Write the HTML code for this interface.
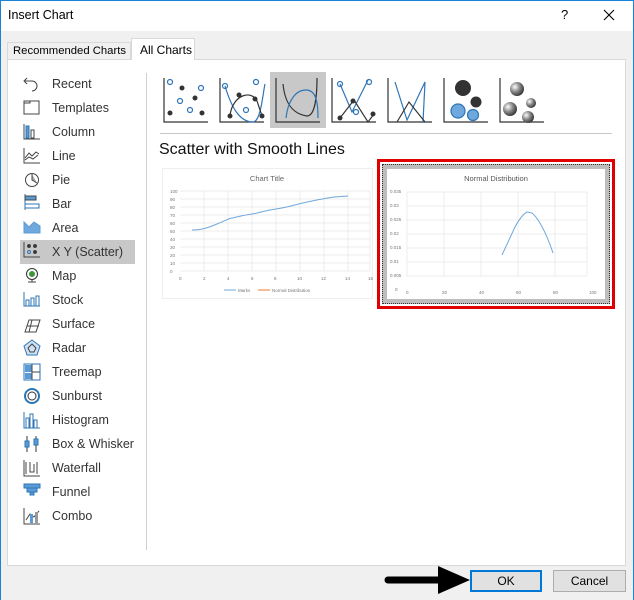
<!DOCTYPE html>
<html><head><style>
*{margin:0;padding:0;box-sizing:border-box}
body{width:634px;height:600px;background:#f0f0f0;font-family:"Liberation Sans",sans-serif;position:relative;overflow:hidden;color:#222}
.abs{position:absolute}
#win{left:0;top:0;width:634px;height:600px;border:1px solid #1883d7;border-bottom:none}
#title{left:1px;top:1px;width:632px;height:30px;background:#fff}
.li{position:absolute;left:52px;font-size:12.5px;color:#333}
.btn{position:absolute;top:570px;height:22px;background:#e1e1e1;border:1px solid #adadad;font-size:12px;text-align:center;line-height:20px;color:#000}
</style></head><body>
<div id="win" class="abs"></div>
<div id="title" class="abs"></div>
<div class="abs" style="left:8px;top:8px;font-size:12.5px;color:#000">Insert Chart</div>
<div class="abs" style="left:561px;top:7px;font-size:13px;color:#000">?</div>
<svg class="abs" style="left:603px;top:9px" width="12" height="12"><path d="M1 1L11 11M11 1L1 11" stroke="#000" stroke-width="1.1"/></svg>
<!-- tabs -->
<div class="abs" style="left:7px;top:42px;width:124px;height:18px;border:1px solid #d9d9d9;border-bottom:none;background:#f0f0f0;font-size:11.3px;padding:2px 0 0 5px;color:#000;white-space:nowrap;overflow:hidden">Recommended Charts</div>
<div class="abs" style="left:131px;top:38px;width:64px;height:22px;border:1px solid #d9d9d9;border-bottom:none;background:#fff;font-size:12px;padding:4px 0 0 8px;color:#000;z-index:2;white-space:nowrap">All Charts</div>
<div class="abs" style="left:7px;top:59px;width:619px;height:507px;background:#fff;border:1px solid #d9d9d9"></div>
<div class="abs" style="left:146px;top:73px;width:1px;height:477px;background:#d0d0d0"></div>
<div class="abs" style="left:20px;top:240px;width:115px;height:24px;background:#c8c8c8"></div>
<div class="li" style="top:77px">Recent</div>
<div class="li" style="top:101px">Templates</div>
<div class="li" style="top:125px">Column</div>
<div class="li" style="top:149px">Line</div>
<div class="li" style="top:173px">Pie</div>
<div class="li" style="top:197px">Bar</div>
<div class="li" style="top:221px">Area</div>
<div class="li" style="top:245px">X Y (Scatter)</div>
<div class="li" style="top:269px">Map</div>
<div class="li" style="top:293px">Stock</div>
<div class="li" style="top:317px">Surface</div>
<div class="li" style="top:341px">Radar</div>
<div class="li" style="top:365px">Treemap</div>
<div class="li" style="top:389px">Sunburst</div>
<div class="li" style="top:413px">Histogram</div>
<div class="li" style="top:437px">Box &amp; Whisker</div>
<div class="li" style="top:461px">Waterfall</div>
<div class="li" style="top:485px">Funnel</div>
<div class="li" style="top:509px">Combo</div>
<svg class="abs" style="left:22px;top:74px" width="20" height="460" fill="none" stroke="#444" stroke-width="1">
<path d="M5 4l-3 3 3 3M3 7h7a5 5 0 0 1 0 10" />
<path d="M2 27h15v13H2zM2 29h6v-2" />
<rect x="4" y="52" width="3" height="12" fill="#5b9bd5" stroke="#2e75b6"/><rect x="9" y="56" width="3" height="8"/><path d="M2 50v15h16"/>
<path d="M2 74v15h16M3 84l4-5 3 3 4-4 3 2M3 86l4-3 4 2 5-4" />
<circle cx="10" cy="106" r="6.5"/><path d="M10 100v6l5 3" fill="#aaa"/>
<path d="M3 120v16M3 122h11v4H3M3 130h14v4H3" stroke="#2e75b6"/><rect x="3" y="122" width="11" height="4" fill="#5b9bd5"/>
<path d="M2 148l5 5 5-5 6 4v7H2z" fill="#6fa8dc" stroke="#5b9bd5"/>
<path d="M2 168v15h16" stroke="#444"/><circle cx="7" cy="172" r="1.5" fill="#333"/><circle cx="13" cy="172" r="1.5" fill="#333"/><circle cx="7" cy="178" r="1.5" stroke="#2e75b6"/><circle cx="13" cy="178" r="1.5" fill="#333"/>
<circle cx="10" cy="200" r="5.5" stroke="#333"/><circle cx="10" cy="200" r="3" fill="#3a9a3a" stroke="none"/><path d="M6 208h8M10 206v2"/>
<path d="M2 218v14h16M4 226h3v6H4zM9 224h3v8H9zM14 222h3v10h-3z" stroke="#2e75b6"/>
<path d="M3 258l4-12h11l-4 12zM5 252h12M10 246l-3 12" />
<path d="M10 266l8 6-3 9H5l-3-9z" stroke="#2e75b6" fill="#cfe2f3"/><path d="M10 270l4 4-2 4H8l-2-4z"/>
<rect x="2" y="290" width="16" height="16" stroke="#2e75b6"/><rect x="3" y="291" width="7" height="7" fill="#5b9bd5" stroke="none"/><rect x="3" y="299" width="7" height="6" fill="#5b9bd5" stroke="none"/><path d="M10 290v16M10 298h8"/>
<circle cx="10" cy="322" r="7" stroke="#2e75b6" stroke-width="2"/><circle cx="10" cy="322" r="4" stroke="#333"/>
<path d="M2 338v16h16M4 344h3v10H4zM8 340h3v14H8zM12 346h3v8h-3z" stroke="#2e75b6"/>
<path d="M5 362v16M14 362v16" stroke="#333"/><rect x="3" y="367" width="4" height="6" fill="#5b9bd5" stroke="#2e75b6"/><rect x="12" y="365" width="4" height="6" fill="#5b9bd5" stroke="#2e75b6"/>
<path d="M2 386v16h16M4 388v12M8 388v10h4v-8M15 388v12"/>
<path d="M2 410h16v4H2zM5 414h10v4H5zM8 418h4v3H8z" fill="#5b9bd5" stroke="#2e75b6"/>
<path d="M2 434v16h16M4 446l4-6 4 3 5-6" /><rect x="8" y="440" width="3" height="9" fill="#5b9bd5" stroke="none"/><rect x="13" y="438" width="3" height="11" fill="#999" stroke="none"/>
</svg>
<!-- chart type icons -->
<div class="abs" style="left:270px;top:72px;width:56px;height:56px;background:#c8c8c8"></div>
<svg class="abs" style="left:160px;top:72px" width="390" height="60" fill="none" stroke-width="1.2">
<g stroke="#333"><path d="M4 6v44h44M60 6v44h44M116 6v44h44M172 6v44h44M228 6v44h44M284 6v44h44M340 6v44h44"/></g>
<g stroke="#2e75b6"><circle cx="10" cy="10" r="2.5"/><circle cx="41" cy="16" r="2.5"/><circle cx="20" cy="29" r="2.5"/><circle cx="30" cy="38" r="2.5"/></g>
<g fill="#333"><circle cx="22" cy="16" r="2.5"/><circle cx="35" cy="26" r="2.5"/><circle cx="10" cy="41" r="2.5"/><circle cx="42" cy="41" r="2.5"/></g>
<path d="M65 14c6 20 14 36 28 36 8 0 10-30 12-38" stroke="#2e75b6"/><path d="M70 44c2-22 24-28 28-12l4 12" stroke="#333"/>
<g stroke="#2e75b6"><circle cx="65" cy="14" r="2.5"/><circle cx="96" cy="10" r="2.5"/><circle cx="86" cy="38" r="2.5"/></g>
<g fill="#333"><circle cx="70" cy="44" r="2.5"/><circle cx="79" cy="23" r="2.5"/><circle cx="95" cy="27" r="2.5"/><circle cx="102" cy="44" r="2.5"/></g>
<path d="M123 12c2 20 10 30 24 32 8 0 10-20 10-38" stroke="#333"/><path d="M126 46c2-18 10-28 20-28s12 12 12 28" stroke="#2e75b6"/>
<path d="M180 12l12 28 16-32" stroke="#2e75b6"/><path d="M180 46l14-18 14 22 6-8" stroke="#333"/>
<g stroke="#2e75b6"><circle cx="180" cy="12" r="2.5"/><circle cx="209" cy="10" r="2.5"/><circle cx="196" cy="40" r="2.5"/></g>
<g fill="#333"><circle cx="180" cy="46" r="2.5"/><circle cx="193" cy="29" r="2.5"/><circle cx="213" cy="42" r="2.5"/></g>
<path d="M235 10l12 38 18-38-2 40" stroke="#2e75b6"/><path d="M237 50l12-20 16 20" stroke="#333"/>
<circle cx="303" cy="16" r="8" fill="#333"/><circle cx="316" cy="30" r="5.5" fill="#333"/><circle cx="298" cy="39" r="7" fill="#6fa8dc" stroke="#2e75b6"/><circle cx="313" cy="43" r="5.5" fill="#6fa8dc" stroke="#2e75b6"/>
<defs><radialGradient id="g" cx="0.35" cy="0.35" r="0.7"><stop offset="0" stop-color="#fff"/><stop offset="0.5" stop-color="#888"/><stop offset="1" stop-color="#333"/></radialGradient></defs>
<circle cx="357" cy="17" r="7" fill="url(#g)"/><circle cx="371" cy="31" r="5" fill="url(#g)"/><circle cx="350" cy="37" r="7" fill="url(#g)"/><circle cx="368" cy="45" r="6" fill="url(#g)"/>
</svg>
<div class="abs" style="left:160px;top:133px;width:452px;height:1px;background:#c8c8c8"></div>
<div class="abs" style="left:159px;top:141px;font-size:16px;color:#111">Scatter with Smooth Lines</div>
<!-- left chart -->
<svg class="abs" style="left:162px;top:168px" width="212" height="132" font-family="Liberation Sans" font-size="4.5" fill="#777">
<rect x="0.5" y="0.5" width="210" height="130" fill="#fff" stroke="#eee"/>
<text x="105" y="13" font-size="7.5" text-anchor="middle" fill="#666">Chart Title</text>
<g stroke="#e6e6e6" stroke-width="0.7">
<path d="M18 23h190M18 31h190M18 39h190M18 47h190M18 55h190M18 63h190M18 71h190M18 79h190M18 87h190M18 95h190M18 103h190"/>
<path d="M42 23v80M66 23v80M90 23v80M114 23v80M138 23v80M162 23v80M186 23v80M208 23v80"/></g>
<text x="8" y="25">100</text><text x="8" y="33">90</text><text x="8" y="41">80</text><text x="8" y="49">70</text><text x="8" y="57">60</text><text x="8" y="65">50</text><text x="8" y="73">40</text><text x="8" y="81">30</text><text x="8" y="89">20</text><text x="8" y="97">10</text><text x="8" y="105">0</text>
<text x="17" y="112">0</text><text x="41" y="112">2</text><text x="65" y="112">4</text><text x="89" y="112">6</text><text x="112" y="112">8</text><text x="135" y="112">10</text><text x="159" y="112">12</text><text x="183" y="112">14</text><text x="206" y="112">16</text>
<path d="M30 62C40 62 45 60 55 56S65 51 70 50 82 47 90 46 100 43 114 41 130 37 150 33 170 29 186 28" fill="none" stroke="#6fa8dc" stroke-width="1"/>
<path d="M62 122h12" stroke="#6fa8dc"/><text x="76" y="124">Marks</text><path d="M96 122h12" stroke="#ed7d31"/><text x="110" y="124">Normal Distribution</text>
</svg>
<!-- right chart -->
<div class="abs" style="left:377px;top:159px;width:238px;height:150px;border:3px solid #e00000"></div>
<div class="abs" style="left:382px;top:164px;width:228px;height:140px;border:1px dotted #333;background:#bdbdbd"></div>
<svg class="abs" style="left:387px;top:169px" width="218" height="130" font-family="Liberation Sans" font-size="4.5" fill="#777">
<rect width="218" height="130" fill="#fff"/>
<text x="109" y="12" font-size="7.5" text-anchor="middle" fill="#555">Normal Distribution</text>
<g stroke="#e6e6e6" stroke-width="0.7">
<path d="M20 23h180M20 37h180M20 51h180M20 65h180M20 79h180M20 93h180M20 107h180"/>
<path d="M20 23v84M57 23v84M94 23v84M131 23v84M168 23v84M200 23v84"/></g>
<text x="3" y="24">0.035</text><text x="3" y="38">0.03</text><text x="3" y="52">0.025</text><text x="3" y="66">0.02</text><text x="3" y="80">0.015</text><text x="3" y="94">0.01</text><text x="3" y="108">0.005</text><text x="8" y="122">0</text>
<text x="19" y="125">0</text><text x="55" y="125">20</text><text x="92" y="125">40</text><text x="129" y="125">60</text><text x="166" y="125">80</text><text x="202" y="125">100</text>
<path d="M115 86L128 58C134 47 138 44 140 43L145 44C150 48 158 60 166 84" fill="none" stroke="#6fa8dc" stroke-width="1"/>
</svg>
<div class="btn" style="left:470px;width:72px;border:2px solid #0078d7;line-height:18px">OK</div>
<div class="btn" style="left:553px;width:73px">Cancel</div>
<svg class="abs" style="left:382px;top:564px" width="90" height="32"><path d="M6 16H58" stroke="#000" stroke-width="7" stroke-linecap="round"/><path d="M56 2L88 16 56 30z" fill="#000"/></svg>
</body></html>
